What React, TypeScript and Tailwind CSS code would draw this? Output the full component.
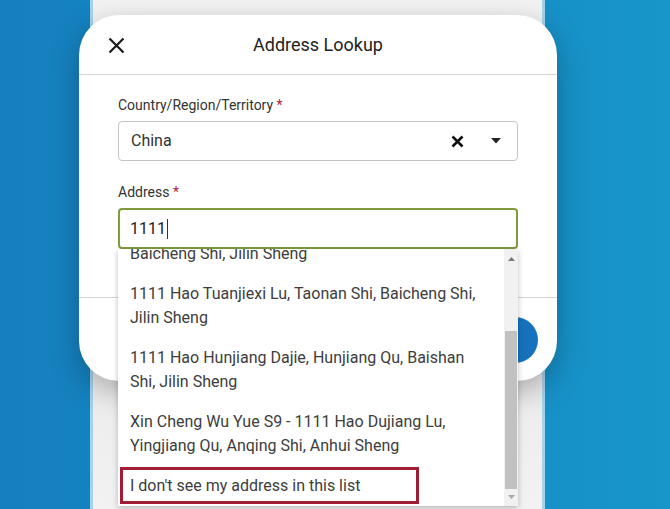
import React from "react";

const items: string[][] = [
  ["1111 Hao Tuanjiexi Lu, Taonan Shi, Baicheng Shi,", "Jilin Sheng"],
  ["1111 Hao Hunjiang Dajie, Hunjiang Qu, Baishan", "Shi, Jilin Sheng"],
  ["Xin Cheng Wu Yue S9 - 1111 Hao Dujiang Lu,", "Yingjiang Qu, Anqing Shi, Anhui Sheng"],
];

export default function App() {
  return (
    <div
      className="relative w-[670px] h-[509px] overflow-hidden bg-gradient-to-r from-[#1580be] via-[#1688c4] to-[#1796ca]"
      style={{ fontFamily: "Roboto, 'Liberation Sans', sans-serif" }}
    >
      {/* background page panel */}
      <div className="ml-[90px] w-[455px] h-full border-x-[3px] border-[#a6d3ec] bg-gradient-to-b from-[#f3f3f3] via-[#e6e6e6] to-[#f2f2f2]" />

      {/* modal */}
      <div className="absolute left-[79px] top-[15px] w-[478px] h-[366px] rounded-[40px] bg-white shadow-[0_10px_30px_rgba(0,0,0,0.28)] flex flex-col overflow-hidden">
        <div className="relative h-[60px] shrink-0 border-b border-[#d4d4d4] flex items-center justify-center">
          <svg
            className="absolute left-[29px] top-[22px]"
            width="17"
            height="17"
            viewBox="0 0 17 17"
            fill="none"
            stroke="#1a1a1a"
            strokeWidth="2.2"
          >
            <path d="M1.5 1.5 L15.5 15.5 M15.5 1.5 L1.5 15.5" />
          </svg>
          <span className="text-[18px] text-[#222] leading-none">Address Lookup</span>
        </div>

        <div className="h-[223px] shrink-0 border-b border-[#d4d4d4] px-[39px] pt-[20px] flex flex-col">
          <div className="text-[14px] leading-[20px] text-[#333]">
            Country/Region/Territory <span className="text-[#b3243c]">*</span>
          </div>
          <div className="mt-[6px] h-[40px] border border-[#c4c4c4] rounded-[4px] flex items-center pl-[12px] pr-[16px]">
            <span className="text-[16px] text-[#333] flex-1">China</span>
            <svg width="13" height="13" viewBox="0 0 13 13" fill="none" stroke="#111" strokeWidth="2.6" className="mr-[27px]">
              <path d="M1.5 1.5 L11.5 11.5 M11.5 1.5 L1.5 11.5" />
            </svg>
            <svg width="10" height="6" viewBox="0 0 10 6" fill="#222">
              <path d="M0 0 L10 0 L5 5.5 Z" />
            </svg>
          </div>
          <div className="mt-[21px] text-[14px] leading-[20px] text-[#333]">
            Address <span className="text-[#b3243c]">*</span>
          </div>
          <div className="mt-[6px] h-[41px] border-2 border-[#7f9b3e] rounded-[4px] flex items-center pl-[10px]">
            <span className="text-[16px] text-[#222]">1111</span>
            <span className="ml-[1px] w-[1px] h-[20px] bg-[#333]" />
          </div>
        </div>

        <div className="flex-1 flex items-center justify-end pr-[19px]">
          <div className="w-[140px] h-[46px] rounded-full bg-[#1672bd]" />
        </div>
      </div>

      {/* dropdown list */}
      <div className="absolute left-[118px] top-[249px] w-[400px] h-[257px] bg-white shadow-[0_2px_6px_rgba(0,0,0,0.25)] flex overflow-hidden">
        <div className="flex-1 overflow-hidden text-[16px] leading-[24px] text-[#3d3d3d]">
          <div className="mt-[-7px] pl-[12px] pb-[8px]">Baicheng Shi, Jilin Sheng</div>
          {items.map((it, i) => (
            <div key={i} className="pl-[12px] pr-[10px] py-[8px]">
              <div>{it[0]}</div>
              <div>{it[1]}</div>
            </div>
          ))}
          <div className="ml-[2px] mt-[1px] w-[299px] h-[37px] border-[3px] border-[#a11d33] flex items-center pl-[7px]">
            I don't see my address in this list
          </div>
        </div>
        <div className="w-[14px] h-full bg-[#f1f1f1] flex flex-col items-center">
          <svg width="7" height="4" viewBox="0 0 7 4" fill="#777" className="mt-[8px]">
            <path d="M0 4 L7 4 L3.5 0 Z" />
          </svg>
          <div className="mt-[70px] w-[12px] h-[158px] bg-[#c1c1c1]" />
          <svg width="7" height="4" viewBox="0 0 7 4" fill="#aaa" className="mt-[6px]">
            <path d="M0 0 L7 0 L3.5 4 Z" />
          </svg>
        </div>
      </div>
    </div>
  );
}
